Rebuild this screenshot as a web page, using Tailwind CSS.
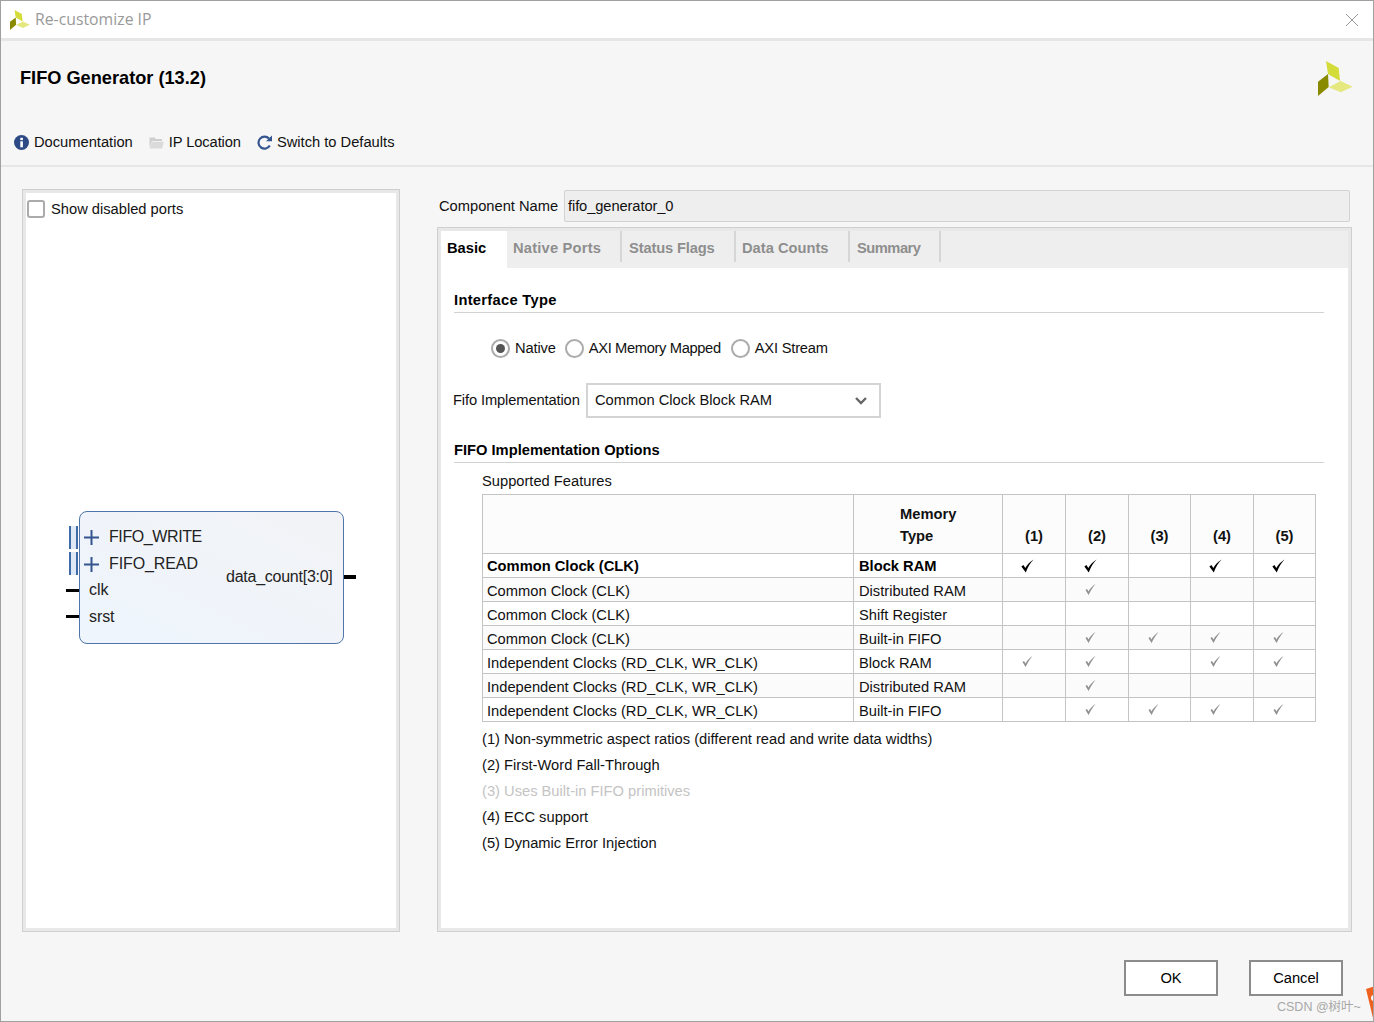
<!DOCTYPE html>
<html lang="en">
<head>
    <meta charset="UTF-8">
    <title>Re-customize IP</title>
    <script src="https://cdn.jsdelivr.net/npm/@tailwindcss/browser@4"></script>
</head>
<body class="bg-[#f6f6f6]">
    <svg class="hidden">
        <symbol id="logo" viewBox="0 0 35 35">
            <polygon points="8,0 20.7,7 22,20 10,13" fill="#d4dc3a"/>
            <polygon points="10.7,26.3 22.7,20 34.7,25.7 22.7,31.3" fill="#e4e87f"/>
            <polygon points="0,20.7 10,13 10.7,26 0,35" fill="#8a8a00"/>
        </symbol>
        <symbol id="tick" viewBox="0 0 12 13">
            <path d="M1.5 6 L3 5 L4.5 7.5 C6 4.5 8.5 2 11.5 0 C9 3 7 6 4.6 11 Z" fill="currentColor"/>
        </symbol>
        <symbol id="tick-b" viewBox="0 0 12 13">
            <path d="M0.3 7 L2.2 5.6 L4 8.4 C5.5 5.5 8 3 11.7 0.5 C8.5 3.8 6.2 7.5 4.4 12.5 Z" fill="currentColor"/>
        </symbol>
    </svg>

    <div class="relative w-[1374px] h-[1022px] overflow-hidden border border-[#a0a0a0] bg-[#f6f6f6] text-[14.7px] text-[#111] font-['Liberation_Sans',Arial,sans-serif]">
        <!-- title bar -->
        <div class="flex items-center h-[37px] bg-white pl-[9px] pr-[14px]">
            <svg class="w-5 h-5"><use href="#logo"/></svg>
            <span class="ml-[5px] text-[15.8px] text-[#9a9a9a] font-['Open_Sans',sans-serif]">Re-customize IP</span>
            <svg class="ml-auto w-[14px] h-[14px]" viewBox="0 0 14 14"><path d="M1 1 L13 13 M13 1 L1 13" stroke="#999" stroke-width="1"/></svg>
        </div>
        <div class="h-[3px] bg-[#e6e6e6]"></div>

        <!-- header -->
        <div class="h-[124px] pt-[20px]">
            <div class="flex items-center justify-between h-[35px] pl-[19px] pr-[20px]">
                <span class="text-[18.2px] font-bold text-black">FIFO Generator (13.2)</span>
                <svg class="w-[35px] h-[35px]"><use href="#logo"/></svg>
            </div>
            <div class="flex items-center h-5 mt-[36px] pl-[13px]">
                <svg class="w-[15px] h-[15px]" viewBox="0 0 15 15"><circle cx="7.5" cy="7.5" r="7.5" fill="#2e4a86"/><rect x="6.3" y="6.3" width="2.6" height="6" fill="#fff"/><rect x="6.3" y="2.8" width="2.6" height="2.3" fill="#fff"/></svg>
                <span class="ml-[5px]">Documentation</span>
                <svg class="ml-4 w-[15px] h-[15px]" viewBox="0 0 15 15"><path d="M0.5 2.5 H5.5 L7 4 H13 V6 H3 L0.5 13 Z" fill="#cfcfcf"/><path d="M3 6.8 H14.8 L13 13.5 H0.8 Z" fill="#dadada"/></svg>
                <span class="ml-[5px] tracking-[-0.1px]">IP Location</span>
                <svg class="ml-4 w-[15px] h-[15px]" viewBox="0 0 15 15"><path d="M12.8 10.5 A6 6 0 1 1 12 3.6" fill="none" stroke="#35558f" stroke-width="2.2"/><polygon points="9,6.2 15,6.2 15,0.5" fill="#35558f"/></svg>
                <span class="ml-[5px]">Switch to Defaults</span>
            </div>
        </div>
        <div class="h-[2px] bg-[#e6e6e6]"></div>

        <!-- main -->
        <div class="flex pt-[22px] pl-[21px] h-[765px]">
            <!-- port diagram -->
            <div class="w-[378px] h-[743px] border border-[#cfcfcf] bg-[#e8e8e8] p-[3px]">
                <div class="relative h-full bg-white">
                    <div class="flex items-center pt-[5px] pl-px">
                        <span class="w-[18px] h-[18px] rounded-[3px] border-2 border-[#ababab] bg-white"></span>
                        <span class="ml-[6px]">Show disabled ports</span>
                    </div>

                    <div class="absolute left-[53px] top-[318px] w-[265px] h-[133px] rounded-[8px] border border-[#4f75ab] bg-gradient-to-tr from-[#eef5fd] to-[#f2f3f6]"></div>

                    <div class="absolute left-[43px] top-[333px] w-[9px] h-[23px] flex justify-between bg-[#dfe9f5]"><span class="w-[2px] bg-[#3f6ca8]"></span><span class="w-[2px] bg-[#3f6ca8]"></span></div>
                    <div class="absolute left-[43px] top-[359px] w-[9px] h-[23px] flex justify-between bg-[#dfe9f5]"><span class="w-[2px] bg-[#3f6ca8]"></span><span class="w-[2px] bg-[#3f6ca8]"></span></div>
                    <svg class="absolute left-[58px] top-[337px] w-[15px] h-[15px]" viewBox="0 0 15 15"><path d="M0 7.5 H15 M7.5 0 V15" stroke="#35558f" stroke-width="2"/></svg>
                    <svg class="absolute left-[58px] top-[364px] w-[15px] h-[15px]" viewBox="0 0 15 15"><path d="M0 7.5 H15 M7.5 0 V15" stroke="#35558f" stroke-width="2"/></svg>
                    <span class="absolute left-[83px] top-[334px] text-[16px] leading-5 tracking-[-0.4px] text-[#222]">FIFO_WRITE</span>
                    <span class="absolute left-[83px] top-[361px] text-[16px] leading-5 tracking-[-0.1px] text-[#222]">FIFO_READ</span>
                    <span class="absolute left-[63px] top-[387px] text-[16px] leading-5 text-[#222]">clk</span>
                    <span class="absolute left-[63px] top-[414px] text-[16px] leading-5 tracking-[-0.1px] text-[#222]">srst</span>
                    <span class="absolute left-[200px] top-[374px] text-[16px] leading-5 tracking-[-0.25px] text-[#222]">data_count[3:0]</span>
                    <div class="absolute left-[40px] top-[396px] w-[13px] h-[3px] bg-black"></div>
                    <div class="absolute left-[40px] top-[422px] w-[13px] h-[3px] bg-black"></div>
                    <div class="absolute left-[318px] top-[382px] w-[12px] h-[4px] bg-black"></div>
                </div>
            </div>

            <!-- settings -->
            <div class="ml-[37px] w-[915px]">
                <div class="flex items-center h-[33px] pl-[2px] pr-[2px]">
                    <span class="pt-[2px]">Component Name</span>
                    <div class="ml-auto w-[786px] h-[32px] flex items-center pl-[3px] pt-[2px] rounded-[2px] border border-[#d2d2d2] bg-[#eeeeee] tracking-[-0.1px]">fifo_generator_0</div>
                </div>
                <div class="mt-[5px] h-[705px] border border-[#cfcfcf] bg-[#e8e8e8] p-[3px]">
                    <div class="h-full bg-white">
                        <div class="flex h-[37px] bg-[#eeeeee] font-bold text-[#8e8e8e]">
                            <div class="flex items-center w-[66px] pl-[6px] pb-[3px] bg-white text-black">Basic</div>
                            <div class="flex items-center self-start h-[31px] w-[115px] pl-[6px] pt-[3px] border-r-2 border-[#d6d6d6] tracking-[0.2px]">Native Ports</div>
                            <div class="flex items-center self-start h-[31px] w-[114px] pl-[7px] pt-[3px] border-r-2 border-[#d6d6d6] tracking-[-0.15px]">Status Flags</div>
                            <div class="flex items-center self-start h-[31px] w-[114px] pl-[6px] pt-[3px] border-r-2 border-[#d6d6d6]">Data Counts</div>
                            <div class="flex items-center self-start h-[31px] w-[91px] pl-[7px] pt-[3px] border-r-2 border-[#d6d6d6] tracking-[-0.5px]">Summary</div>
                        </div>

                        <div class="pl-[13px] w-[883px]">
                            <div class="mt-[24px] h-[21px] leading-4 border-b border-[#d2d2d2] font-bold text-black tracking-[0.3px]">Interface Type</div>

                            <div class="flex items-center h-5 mt-[25px] pl-[37px]">
                                <span class="flex items-center justify-center w-[19px] h-[19px] rounded-full border-2 border-[#ababab] bg-white"><span class="w-[9px] h-[9px] rounded-full bg-[#555]"></span></span>
                                <span class="ml-[5px] tracking-[-0.15px]">Native</span>
                                <span class="ml-[9px] w-[19px] h-[19px] rounded-full border-2 border-[#ababab] bg-white"></span>
                                <span class="ml-[5px] tracking-[-0.35px]">AXI Memory Mapped</span>
                                <span class="ml-[10px] w-[19px] h-[19px] rounded-full border-2 border-[#ababab] bg-white"></span>
                                <span class="ml-[5px] tracking-[-0.2px]">AXI Stream</span>
                            </div>

                            <div class="flex items-center h-[35px] mt-[25px] -ml-px">
                                <span class="w-[133px] tracking-[-0.12px]">Fifo Implementation</span>
                                <div class="flex items-center justify-between w-[295px] h-[35px] pl-[7px] pr-3 border-2 border-[#d4d4d4] bg-white">
                                    <span>Common Clock Block RAM</span>
                                    <svg class="w-3 h-2" viewBox="0 0 12 8"><path d="M1 1 L6 6 L11 1" fill="none" stroke="#666" stroke-width="2.4"/></svg>
                                </div>
                            </div>

                            <div class="mt-[24px] h-[21px] leading-4 border-b border-[#d2d2d2] font-bold text-black">FIFO Implementation Options</div>

                            <div class="mt-2 ml-[28px] h-5 leading-5">Supported Features</div>

                            <table class="mt-[3px] ml-[28px] w-[833px] table-fixed border-collapse border border-[#c4c4c4] bg-white leading-5 [&_td]:pt-[2px]">
                                <colgroup>
                                    <col class="w-[371px]"><col class="w-[149px]"><col class="w-[63px]"><col class="w-[63px]"><col class="w-[62px]"><col class="w-[63px]"><col class="w-[62px]">
                                </colgroup>
                                <tr class="h-[59px] bg-[#fcfcfc] font-bold">
                                    <th class="border border-[#c4c4c4]"></th>
                                    <th class="border border-[#c4c4c4] pl-[46px] text-left leading-[22px] align-bottom pb-[6px]">Memory<br>Type</th>
                                    <th class="border border-[#c4c4c4] align-bottom pb-[7px]">(1)</th>
                                    <th class="border border-[#c4c4c4] align-bottom pb-[7px]">(2)</th>
                                    <th class="border border-[#c4c4c4] align-bottom pb-[7px]">(3)</th>
                                    <th class="border border-[#c4c4c4] align-bottom pb-[7px]">(4)</th>
                                    <th class="border border-[#c4c4c4] align-bottom pb-[7px]">(5)</th>
                                </tr>
                                <tr class="h-6 font-bold text-black [&>td]:pt-px!">
                                    <td class="border border-[#c4c4c4] pl-1">Common Clock (CLK)</td>
                                    <td class="border border-[#c4c4c4] pl-[5px]">Block RAM</td>
                                    <td class="border border-[#c4c4c4] pl-[18px]"><svg class="w-[13px] h-[14px]"><use href="#tick-b"/></svg></td>
                                    <td class="border border-[#c4c4c4] pl-[18px]"><svg class="w-[13px] h-[14px]"><use href="#tick-b"/></svg></td>
                                    <td class="border border-[#c4c4c4]"></td>
                                    <td class="border border-[#c4c4c4] pl-[18px]"><svg class="w-[13px] h-[14px]"><use href="#tick-b"/></svg></td>
                                    <td class="border border-[#c4c4c4] pl-[18px]"><svg class="w-[13px] h-[14px]"><use href="#tick-b"/></svg></td>
                                </tr>
                                <tr class="h-6 bg-[#fbfbfb] text-[#8f8f8f]">
                                    <td class="border border-[#c4c4c4] pl-1 text-[#111]">Common Clock (CLK)</td>
                                    <td class="border border-[#c4c4c4] pl-[5px] text-[#111]">Distributed RAM</td>
                                    <td class="border border-[#c4c4c4]"></td>
                                    <td class="border border-[#c4c4c4] pl-[18px]"><svg class="w-3 h-[13px]"><use href="#tick"/></svg></td>
                                    <td class="border border-[#c4c4c4]"></td>
                                    <td class="border border-[#c4c4c4]"></td>
                                    <td class="border border-[#c4c4c4]"></td>
                                </tr>
                                <tr class="h-6 text-[#8f8f8f]">
                                    <td class="border border-[#c4c4c4] pl-1 text-[#111]">Common Clock (CLK)</td>
                                    <td class="border border-[#c4c4c4] pl-[5px] text-[#111]">Shift Register</td>
                                    <td class="border border-[#c4c4c4]"></td>
                                    <td class="border border-[#c4c4c4]"></td>
                                    <td class="border border-[#c4c4c4]"></td>
                                    <td class="border border-[#c4c4c4]"></td>
                                    <td class="border border-[#c4c4c4]"></td>
                                </tr>
                                <tr class="h-6 bg-[#fbfbfb] text-[#8f8f8f]">
                                    <td class="border border-[#c4c4c4] pl-1 text-[#111]">Common Clock (CLK)</td>
                                    <td class="border border-[#c4c4c4] pl-[5px] text-[#111]">Built-in FIFO</td>
                                    <td class="border border-[#c4c4c4]"></td>
                                    <td class="border border-[#c4c4c4] pl-[18px]"><svg class="w-3 h-[13px]"><use href="#tick"/></svg></td>
                                    <td class="border border-[#c4c4c4] pl-[18px]"><svg class="w-3 h-[13px]"><use href="#tick"/></svg></td>
                                    <td class="border border-[#c4c4c4] pl-[18px]"><svg class="w-3 h-[13px]"><use href="#tick"/></svg></td>
                                    <td class="border border-[#c4c4c4] pl-[18px]"><svg class="w-3 h-[13px]"><use href="#tick"/></svg></td>
                                </tr>
                                <tr class="h-6 text-[#8f8f8f]">
                                    <td class="border border-[#c4c4c4] pl-1 text-[#111]">Independent Clocks (RD_CLK, WR_CLK)</td>
                                    <td class="border border-[#c4c4c4] pl-[5px] text-[#111]">Block RAM</td>
                                    <td class="border border-[#c4c4c4] pl-[18px]"><svg class="w-3 h-[13px]"><use href="#tick"/></svg></td>
                                    <td class="border border-[#c4c4c4] pl-[18px]"><svg class="w-3 h-[13px]"><use href="#tick"/></svg></td>
                                    <td class="border border-[#c4c4c4]"></td>
                                    <td class="border border-[#c4c4c4] pl-[18px]"><svg class="w-3 h-[13px]"><use href="#tick"/></svg></td>
                                    <td class="border border-[#c4c4c4] pl-[18px]"><svg class="w-3 h-[13px]"><use href="#tick"/></svg></td>
                                </tr>
                                <tr class="h-6 bg-[#fbfbfb] text-[#8f8f8f]">
                                    <td class="border border-[#c4c4c4] pl-1 text-[#111]">Independent Clocks (RD_CLK, WR_CLK)</td>
                                    <td class="border border-[#c4c4c4] pl-[5px] text-[#111]">Distributed RAM</td>
                                    <td class="border border-[#c4c4c4]"></td>
                                    <td class="border border-[#c4c4c4] pl-[18px]"><svg class="w-3 h-[13px]"><use href="#tick"/></svg></td>
                                    <td class="border border-[#c4c4c4]"></td>
                                    <td class="border border-[#c4c4c4]"></td>
                                    <td class="border border-[#c4c4c4]"></td>
                                </tr>
                                <tr class="h-6 text-[#8f8f8f]">
                                    <td class="border border-[#c4c4c4] pl-1 text-[#111]">Independent Clocks (RD_CLK, WR_CLK)</td>
                                    <td class="border border-[#c4c4c4] pl-[5px] text-[#111]">Built-in FIFO</td>
                                    <td class="border border-[#c4c4c4]"></td>
                                    <td class="border border-[#c4c4c4] pl-[18px]"><svg class="w-3 h-[13px]"><use href="#tick"/></svg></td>
                                    <td class="border border-[#c4c4c4] pl-[18px]"><svg class="w-3 h-[13px]"><use href="#tick"/></svg></td>
                                    <td class="border border-[#c4c4c4] pl-[18px]"><svg class="w-3 h-[13px]"><use href="#tick"/></svg></td>
                                    <td class="border border-[#c4c4c4] pl-[18px]"><svg class="w-3 h-[13px]"><use href="#tick"/></svg></td>
                                </tr>
                            </table>

                            <div class="mt-1 ml-[28px] leading-[26px]">
                                <div>(1) Non-symmetric aspect ratios (different read and write data widths)</div>
                                <div>(2) First-Word Fall-Through</div>
                                <div class="text-[#c4c4c4]">(3) Uses Built-in FIFO primitives</div>
                                <div>(4) ECC support</div>
                                <div>(5) Dynamic Error Injection</div>
                            </div>
                        </div>
                    </div>
                </div>
            </div>
        </div>

        <!-- footer buttons -->
        <div class="flex justify-end gap-[31px] pt-[28px] pr-[30px]">
            <button class="w-[94px] h-[36px] border-2 border-[#8c8c8c] bg-white text-black">OK</button>
            <button class="w-[94px] h-[36px] border-2 border-[#8c8c8c] bg-white text-black">Cancel</button>
        </div>

        <!-- watermark over the corner -->
        <span class="absolute left-[1276px] top-[997px] text-[12.5px] leading-[18px] text-[#a8a8a8] font-['Liberation_Sans','Noto_Sans_CJK_SC',sans-serif]">CSDN @树叶~</span>
        <svg class="absolute left-[1365px] top-[985px] w-[9px] h-[36px]" viewBox="0 0 9 36"><polygon points="0,3 9,0 9,36 8,36" fill="#f0601e"/><circle cx="8" cy="12" r="3" fill="#fff"/></svg>
    </div>
</body>
</html>
